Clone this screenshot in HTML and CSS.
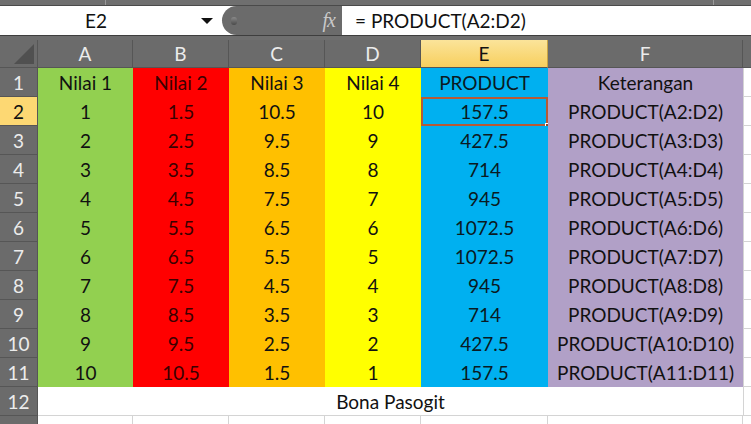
FILE: index.html
```html
<!DOCTYPE html>
<html>
<head>
<meta charset="utf-8">
<link rel="stylesheet" href="styles.css">
</head>
<body>
<div class="app">
  <div class="topstrip"><span class="sep s1"></span><span class="sep s2"></span></div>
  <div class="fbar">
    <div class="namebox"><span class="nbtext">E2</span><span class="arrow"></span></div>
    <div class="pill"><span class="grip"></span><span class="fx">fx</span></div>
    <div class="formula">= PRODUCT(A2:D2)</div>
  </div>
  <div class="band"></div>
  <div class="sheet">
    <div class="corner"><span class="tri"></span></div>
    <div class="ch">A</div><div class="ch">B</div><div class="ch">C</div><div class="ch">D</div><div class="ch sel">E</div><div class="ch">F</div><div class="ch last"></div>

    <div class="rh">1</div>
    <div class="c g">Nilai 1</div><div class="c r">Nilai 2</div><div class="c o">Nilai 3</div><div class="c y">Nilai 4</div><div class="c b">PRODUCT</div><div class="c p">Keterangan</div><div class="c w"></div>

    <div class="rh sel">2</div>
    <div class="c g">1</div><div class="c r">1.5</div><div class="c o">10.5</div><div class="c y">10</div><div class="c b active">157.5<span class="handle"></span></div><div class="c p">PRODUCT(A2:D2)</div><div class="c w"></div>

    <div class="rh">3</div>
    <div class="c g">2</div><div class="c r">2.5</div><div class="c o">9.5</div><div class="c y">9</div><div class="c b">427.5</div><div class="c p">PRODUCT(A3:D3)</div><div class="c w"></div>

    <div class="rh">4</div>
    <div class="c g">3</div><div class="c r">3.5</div><div class="c o">8.5</div><div class="c y">8</div><div class="c b">714</div><div class="c p">PRODUCT(A4:D4)</div><div class="c w"></div>

    <div class="rh">5</div>
    <div class="c g">4</div><div class="c r">4.5</div><div class="c o">7.5</div><div class="c y">7</div><div class="c b">945</div><div class="c p">PRODUCT(A5:D5)</div><div class="c w"></div>

    <div class="rh">6</div>
    <div class="c g">5</div><div class="c r">5.5</div><div class="c o">6.5</div><div class="c y">6</div><div class="c b">1072.5</div><div class="c p">PRODUCT(A6:D6)</div><div class="c w"></div>

    <div class="rh">7</div>
    <div class="c g">6</div><div class="c r">6.5</div><div class="c o">5.5</div><div class="c y">5</div><div class="c b">1072.5</div><div class="c p">PRODUCT(A7:D7)</div><div class="c w"></div>

    <div class="rh">8</div>
    <div class="c g">7</div><div class="c r">7.5</div><div class="c o">4.5</div><div class="c y">4</div><div class="c b">945</div><div class="c p">PRODUCT(A8:D8)</div><div class="c w"></div>

    <div class="rh">9</div>
    <div class="c g">8</div><div class="c r">8.5</div><div class="c o">3.5</div><div class="c y">3</div><div class="c b">714</div><div class="c p">PRODUCT(A9:D9)</div><div class="c w"></div>

    <div class="rh">10</div>
    <div class="c g">9</div><div class="c r">9.5</div><div class="c o">2.5</div><div class="c y">2</div><div class="c b">427.5</div><div class="c p">PRODUCT(A10:D10)</div><div class="c w"></div>

    <div class="rh">11</div>
    <div class="c g">10</div><div class="c r">10.5</div><div class="c o">1.5</div><div class="c y">1</div><div class="c b">157.5</div><div class="c p">PRODUCT(A11:D11)</div><div class="c w"></div>

    <div class="rh">12</div>
    <div class="c merged">Bona Pasogit</div><div class="c w"></div>

    <div class="rh blank"></div>
    <div class="e"></div><div class="e"></div><div class="e"></div><div class="e"></div><div class="e"></div><div class="e"></div><div class="e last"></div>
  </div>
</div>
</body>
</html>
```
FILE: styles.css
```css
* { box-sizing: border-box; }
html, body { margin: 0; padding: 0; background: #ffffff; }
body { width: 751px; height: 424px; overflow: hidden; font-family: Lato, "Open Sans", sans-serif; }
.app { width: 751px; height: 424px; display: flex; flex-direction: column; overflow: hidden; }

.topstrip { height: 6px; background: #6f6f6f; border-bottom: 1px solid #4a4a4a; position: relative; flex: none; }
.sep { position: absolute; top: 0; width: 1px; height: 5px; background: #9a9a9a; }
.s1 { left: 105px; }
.s2 { left: 713px; }

.fbar { height: 29px; display: flex; flex: none; background: #ffffff; }
.namebox { width: 222px; display: flex; align-items: center; position: relative; }
.nbtext { width: 192px; text-align: center; font-size: 19px; color: #111; }
.arrow { width: 0; height: 0; border-left: 6px solid transparent; border-right: 6px solid transparent; border-top: 6px solid #111; margin-left: 9px; }
.pill { width: 120px; background: #6b6b6b; border-radius: 15px 0 0 15px; display: flex; align-items: center; justify-content: space-between; padding: 0 7px 0 9px; }
.grip { width: 6px; height: 8px; border-radius: 3px; background: linear-gradient(#8a8a8a, #4a4a4a); }
.fx { font-family: "Liberation Serif", serif; font-style: italic; font-size: 20px; color: #c9c9c9; letter-spacing: -1px; }
.formula { flex: 1; font-size: 19px; color: #111; padding-left: 13px; display: flex; align-items: center; }

.band { height: 5px; background: #6e6e6e; border-top: 1px solid #3e3e3e; flex: none; }

.sheet { flex: none; display: grid; grid-template-columns: 38px 95px 96px 96px 96px 127px 195px 1fr; grid-template-rows: 28px repeat(13, 29px); }

.corner { background: #6b6b6b; border-right: 1px solid #565656; border-bottom: 1px solid #565656; position: relative; }
.tri { position: absolute; right: 3px; bottom: 3px; width: 0; height: 0; border-left: 20px solid transparent; border-bottom: 20px solid #505050; }

.ch { background: #6b6b6b; color: #ececec; font-size: 19px; display: flex; align-items: center; justify-content: center; border-right: 1px solid #565656; border-bottom: 1px solid #565656; }
.ch.sel { background: linear-gradient(#fbe49a, #f7cf5e); color: #111; border-right-color: #c9a444; }
.ch.last { border-right: none; }

.rh { background: #6b6b6b; color: #ececec; font-size: 19px; display: flex; align-items: center; justify-content: center; border-right: 1px solid #565656; border-bottom: 1px solid #565656; }
.rh.sel { background: #fdd873; color: #111; }

.c { display: flex; align-items: center; justify-content: center; font-size: 19px; color: #111; position: relative; white-space: nowrap; }
.g { background: #92d050; }
.r { background: #ff0000; color: #3a0000; }
.o { background: #ffc000; }
.y { background: #ffff00; }
.b { background: #00b0f0; color: #0a1a22; }
.p { background: #b1a0c7; }
.w { background: #ffffff; border-left: 1px solid #d4d4d4; border-bottom: 1px solid #d4d4d4; }
.merged { grid-column: span 6; background: #ffffff; border-bottom: 1px solid #d4d4d4; }

.active { border: 2px solid #b65a35; }
.handle { position: absolute; right: -4px; bottom: -4px; width: 5px; height: 5px; background: #8a4a2a; border: 1px solid #ffffff; }

.e { border-right: 1px solid #d4d4d4; }
.e.last { border-right: none; }
```
